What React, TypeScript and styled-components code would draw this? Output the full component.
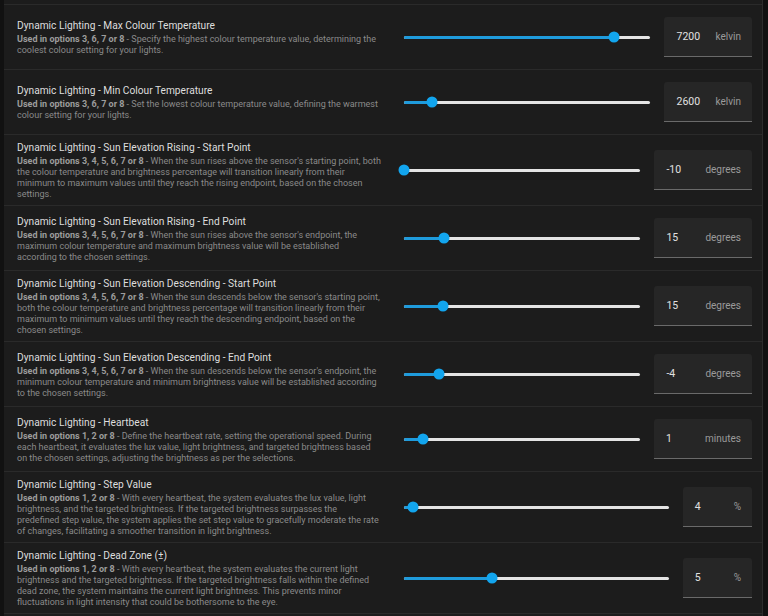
import React from 'react';
import styled, { createGlobalStyle } from 'styled-components';

interface Setting {
  title: string;
  options: string;
  text: string;
  value: string;
  unit: string;
  fraction: number;
}

const settings: Setting[] = [
  {
    title: 'Dynamic Lighting - Max Colour Temperature',
    options: 'Used in options 3, 6, 7 or 8',
    text: 'Specify the highest colour temperature value, determining the coolest colour setting for your lights.',
    value: '7200',
    unit: 'kelvin',
    fraction: 0.85,
  },
  {
    title: 'Dynamic Lighting - Min Colour Temperature',
    options: 'Used in options 3, 6, 7 or 8',
    text: 'Set the lowest colour temperature value, defining the warmest colour setting for your lights.',
    value: '2600',
    unit: 'kelvin',
    fraction: 0.113,
  },
  {
    title: 'Dynamic Lighting - Sun Elevation Rising - Start Point',
    options: 'Used in options 3, 4, 5, 6, 7 or 8',
    text: "When the sun rises above the sensor's starting point, both the colour temperature and brightness percentage will transition linearly from their minimum to maximum values until they reach the rising endpoint, based on the chosen settings.",
    value: '-10',
    unit: 'degrees',
    fraction: 0,
  },
  {
    title: 'Dynamic Lighting - Sun Elevation Rising - End Point',
    options: 'Used in options 3, 4, 5, 6, 7 or 8',
    text: "When the sun rises above the sensor's endpoint, the maximum colour temperature and maximum brightness value will be established according to the chosen settings.",
    value: '15',
    unit: 'degrees',
    fraction: 0.169,
  },
  {
    title: 'Dynamic Lighting - Sun Elevation Descending - Start Point',
    options: 'Used in options 3, 4, 5, 6, 7 or 8',
    text: "When the sun descends below the sensor's starting point, both the colour temperature and brightness percentage will transition linearly from their maximum to minimum values until they reach the descending endpoint, based on the chosen settings.",
    value: '15',
    unit: 'degrees',
    fraction: 0.165,
  },
  {
    title: 'Dynamic Lighting - Sun Elevation Descending - End Point',
    options: 'Used in options 3, 4, 5, 6, 7 or 8',
    text: "When the sun descends below the sensor's endpoint, the minimum colour temperature and minimum brightness value will be established according to the chosen settings.",
    value: '-4',
    unit: 'degrees',
    fraction: 0.148,
  },
  {
    title: 'Dynamic Lighting - Heartbeat',
    options: 'Used in options 1, 2 or 8',
    text: 'Define the heartbeat rate, setting the operational speed. During each heartbeat, it evaluates the lux value, light brightness, and targeted brightness based on the chosen settings, adjusting the brightness as per the selections.',
    value: '1',
    unit: 'minutes',
    fraction: 0.08,
  },
  {
    title: 'Dynamic Lighting - Step Value',
    options: 'Used in options 1, 2 or 8',
    text: 'With every heartbeat, the system evaluates the lux value, light brightness, and the targeted brightness. If the targeted brightness surpasses the predefined step value, the system applies the set step value to gracefully moderate the rate of changes, facilitating a smoother transition in light brightness.',
    value: '4',
    unit: '%',
    fraction: 0.034,
  },
  {
    title: 'Dynamic Lighting - Dead Zone (±)',
    options: 'Used in options 1, 2 or 8',
    text: 'With every heartbeat, the system evaluates the current light brightness and the targeted brightness. If the targeted brightness falls within the defined dead zone, the system maintains the current light brightness. This prevents minor fluctuations in light intensity that could be bothersome to the eye.',
    value: '5',
    unit: '%',
    fraction: 0.333,
  },
];

const App: React.FC = () => {
  return (
    <>
      <GlobalStyle />
      <Card>
        <CutRow />
        {settings.map((s) => (
          <Row key={s.title}>
            <TextCol>
              <Title>{s.title}</Title>
              <Description>
                <strong>{s.options}</strong> - {s.text}
              </Description>
            </TextCol>
            <Slider>
              <Track>
                <ActiveTrack style={{ width: `${s.fraction * 100}%` }} />
                <Thumb style={{ left: `${s.fraction * 100}%` }} />
              </Track>
            </Slider>
            <NumberField>
              <Value>{s.value}</Value>
              <Unit>{s.unit}</Unit>
            </NumberField>
          </Row>
        ))}
      </Card>
    </>
  );
};

export default App;

const GlobalStyle = createGlobalStyle`
  html, body {
    margin: 0;
    padding: 0;
    background: #111111;
    font-family: Roboto, 'Noto Sans', sans-serif;
  }
`;

const Card = styled.div`
  margin: 0 5px 0 4px;
  height: 616px;
  overflow: hidden;
  background: #1c1c1c;
  border-right: 1px solid #2c2c2c;
`;

const CutRow = styled.div`
  height: 4px;
  border-bottom: 1px solid #2a2a2a;
`;

const Row = styled.div`
  display: flex;
  align-items: center;
  box-sizing: border-box;
  min-height: 65px;
  padding: 5px 10px 5px 13px;
  border-bottom: 1px solid #2a2a2a;
`;

const TextCol = styled.div`
  width: 364px;
  flex-shrink: 0;
`;

const Title = styled.div`
  color: #dedede;
  font-size: 10.2px;
  line-height: 15px;
`;

const Description = styled.div`
  margin-top: 1px;
  color: #8a8a8a;
  font-size: 9px;
  line-height: 11px;

  strong {
    font-weight: 700;
    color: #9c9c9c;
  }
`;

const Slider = styled.div`
  flex: 1;
  margin: 0 14px 0 23px;
`;

const Track = styled.div`
  position: relative;
  height: 3px;
  border-radius: 2px;
  background: #e4e4e4;
`;

const ActiveTrack = styled.div`
  height: 100%;
  border-radius: 2px;
  background: #1f9bdc;
`;

const Thumb = styled.div`
  position: absolute;
  top: 50%;
  width: 11px;
  height: 11px;
  border-radius: 50%;
  background: #12a5ee;
  transform: translate(-50%, -50%);
`;

const NumberField = styled.div`
  display: flex;
  align-items: center;
  box-sizing: border-box;
  height: 40px;
  padding: 0 11px 0 12px;
  background: #262626;
  border-radius: 3px 3px 0 0;
  border-bottom: 1px solid #6a6a6a;
`;

const Value = styled.span`
  width: 39px;
  color: #e1e1e1;
  font-size: 10.5px;
`;

const Unit = styled.span`
  color: #9a9a9a;
  font-size: 10px;
`;
